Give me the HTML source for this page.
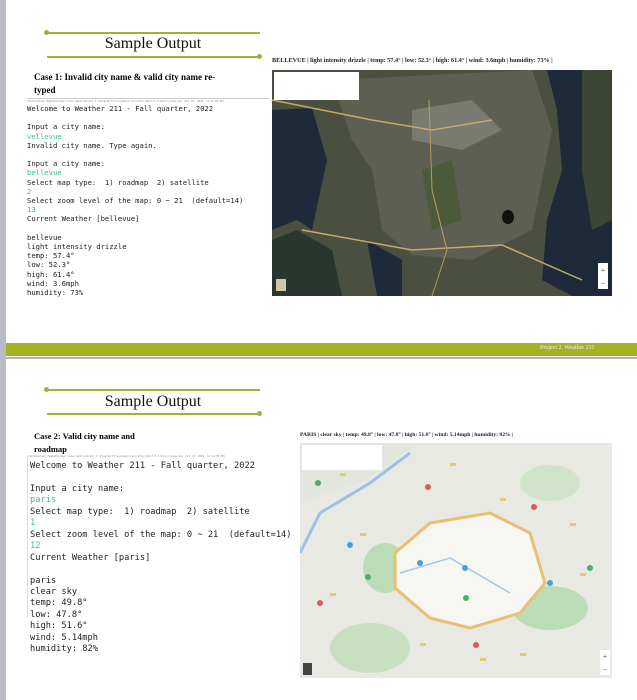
<!DOCTYPE html>
<html><head><meta charset="utf-8"><style>
*{margin:0;padding:0;box-sizing:border-box}
body{width:637px;height:700px;position:relative;background:#fff;overflow:hidden;font-family:"Liberation Serif",serif}
.abs{position:absolute}
.mono{font-family:"DejaVu Sans Mono","Liberation Mono",monospace;white-space:pre;color:#222}
.g{color:#3bbfa0}
.hl{position:absolute;height:2px;background:#a3b13a}
.dot{position:absolute;width:5px;height:5px;border-radius:50%;background:#a3b13a}
</style></head><body>
<div class="abs" style="left:0;top:0;width:6px;height:700px;background:#b9bcc6"></div>

<!-- Top slide -->
<div class="hl" style="left:46px;top:32px;width:214px"></div><div class="dot" style="left:44px;top:30px"></div>
<div class="abs" style="left:46px;top:35px;width:214px;text-align:center;font-size:16px;color:#111">Sample Output</div>
<div class="hl" style="left:47px;top:56px;width:213px"></div><div class="dot" style="left:257px;top:54px"></div>
<div class="abs" style="left:34px;top:71px;font-size:9px;font-weight:bold;line-height:13px;width:200px">Case 1: Invalid city name &amp; valid city name re-<br>typed</div>
<div class="abs" style="left:27px;top:98px;width:242px;height:1px;background:#ccc"></div>
<div class="abs mono" style="left:27px;top:100px;font-size:2.5px;color:#888">&lt;terminated&gt; MyWeatherApp [Java Application] C:\Program Files\Amazon Corretto\jdk17.0.4_9\bin\javaw.exe (Oct 15, 2022, 11:27:28 PM)</div>
<div class="abs mono" style="left:27px;top:104px;font-size:7.2px;line-height:9.2px">Welcome to Weather 211 - Fall quarter, 2022

Input a city name:
<span class="g">vellevue</span>
Invalid city name. Type again.

Input a city name:
<span class="g">bellevue</span>
Select map type:  1) roadmap  2) satellite
<span class="g">2</span>
Select zoom level of the map: 0 ~ 21  (default=14)
<span class="g">13</span>
Current Weather [bellevue]

bellevue
light intensity drizzle
temp: 57.4°
low: 52.3°
high: 61.4°
wind: 3.6mph
humidity: 73%</div>

<div class="abs" style="left:272px;top:57px;font-size:6.2px;font-weight:bold;white-space:nowrap;color:#222">BELLEVUE | light intensity drizzle | temp: 57.4° | low: 52.3° | high: 61.4° | wind: 3.6mph | humidity: 73% |</div>
<svg class="abs" style="left:272px;top:70px" width="340" height="226" viewBox="0 0 340 226">
<rect width="340" height="226" fill="#4a4f3f"/>
<path d="M0 40 L40 38 L55 90 L40 160 L25 150 L0 160Z" fill="#1e2a3a"/>
<path d="M0 170 L25 160 L60 180 L70 226 L0 226Z" fill="#2a3530"/>
<path d="M95 170 L130 190 L130 226 L105 226 Z" fill="#1e2a3a"/>
<path d="M275 0 L340 0 L340 226 L300 226 L270 210 L275 150 L290 100 L285 40Z" fill="#1e2a3a"/>
<path d="M310 0 L340 0 L340 150 L320 160 L310 100 Z" fill="#3d4535"/>
<path d="M60 10 L260 0 L280 60 L260 160 L200 190 L140 185 L110 160 L100 100 L80 70 Z" fill="#5c5f52"/>
<path d="M140 40 L200 30 L230 60 L190 80 L140 70Z" fill="#7a7b70"/>
<path d="M150 100 L180 90 L190 150 L160 160Z" fill="#4d5a3a"/>
<path d="M0 30 L100 50 L160 60 L220 50" stroke="#c9a96a" stroke-width="1.5" fill="none"/>
<path d="M30 160 L140 180 L230 175 L310 210" stroke="#c9a96a" stroke-width="1.5" fill="none"/>
<path d="M157 30 L160 120 L175 180 L160 226" stroke="#b99a60" stroke-width="1" fill="none"/>
<ellipse cx="236" cy="147" rx="6" ry="7" fill="#111"/>
<rect x="2" y="2" width="85" height="28" fill="#fff"/>
<rect x="4" y="209" width="10" height="12" fill="#cfc7a8"/>
<rect x="326" y="193" width="10" height="26" fill="#fff"/>
<text x="331" y="203" font-size="8" text-anchor="middle" fill="#555">+</text>
<text x="331" y="216" font-size="8" text-anchor="middle" fill="#555">−</text>
</svg>

<!-- Band -->
<div class="abs" style="left:6px;top:343px;width:631px;height:13px;background:#a3b322"></div>
<div class="abs" style="left:6px;top:357px;width:631px;height:2px;background:#b5b5b5"></div>
<div class="abs" style="left:540px;top:345px;font-size:6px;color:#eef;">Project 2. Weather 211</div>

<!-- Bottom slide -->
<div class="hl" style="left:46px;top:389px;width:214px"></div><div class="dot" style="left:44px;top:387px"></div>
<div class="abs" style="left:46px;top:393px;width:214px;text-align:center;font-size:16px;color:#111">Sample Output</div>
<div class="hl" style="left:47px;top:413px;width:213px"></div><div class="dot" style="left:257px;top:411px"></div>
<div class="abs" style="left:34px;top:430px;font-size:8.5px;font-weight:bold;line-height:13px">Case 2: Valid city name and<br>roadmap</div>
<div class="abs" style="left:27px;top:456px;width:1px;height:162px;background:#ddd"></div>
<div class="abs mono" style="left:28px;top:455px;font-size:2.5px;color:#888">&lt;terminated&gt; MyWeatherApp [Java Application] C:\Program Files\Amazon Corretto\jdk17.0.4_9\bin\javaw.exe (Oct 15, 2022, 11:24:09 PM)</div>
<div class="abs mono" style="left:30px;top:461px;font-size:8.7px;line-height:11.45px">Welcome to Weather 211 - Fall quarter, 2022

Input a city name:
<span class="g">paris</span>
Select map type:  1) roadmap  2) satellite
<span class="g">1</span>
Select zoom level of the map: 0 ~ 21  (default=14)
<span class="g">12</span>
Current Weather [paris]

paris
clear sky
temp: 49.8°
low: 47.8°
high: 51.6°
wind: 5.14mph
humidity: 82%</div>

<div class="abs" style="left:300px;top:432px;font-size:5.6px;font-weight:bold;white-space:nowrap;color:#222">PARIS | clear sky | temp: 49.8° | low: 47.8° | high: 51.6° | wind: 5.14mph | humidity: 82% |</div>
<svg class="abs" style="left:300px;top:443px" width="312" height="235" viewBox="0 0 312 235">
<rect width="312" height="235" fill="#e8e9e3"/>
<path d="M0 60 L60 40 L90 20 L120 0 L0 0Z" fill="#e3e6df"/>
<path d="M0 110 L20 70 L70 40 L110 10" stroke="#9cc0e8" stroke-width="3" fill="none"/>
<ellipse cx="85" cy="125" rx="22" ry="25" fill="#bcdcb8"/>
<ellipse cx="250" cy="165" rx="38" ry="22" fill="#bcdcb8"/>
<ellipse cx="70" cy="205" rx="40" ry="25" fill="#c7e0bf"/>
<ellipse cx="250" cy="40" rx="30" ry="18" fill="#cfe4c8"/>
<path d="M95 110 L130 80 L190 70 L230 90 L245 140 L220 170 L170 185 L130 175 L95 145Z" fill="#f6f6f3" stroke="#e8c070" stroke-width="3"/>
<path d="M100 130 L150 115 L210 150" stroke="#a6c6e6" stroke-width="1.5" fill="none"/>
<g fill="#e8c870">
<rect x="40" y="30" width="6" height="3"/><rect x="150" y="20" width="6" height="3"/><rect x="200" y="55" width="6" height="3"/><rect x="270" y="80" width="6" height="3"/><rect x="30" y="150" width="6" height="3"/><rect x="120" y="200" width="6" height="3"/><rect x="220" y="210" width="6" height="3"/><rect x="280" y="130" width="6" height="3"/><rect x="60" y="90" width="6" height="3"/><rect x="180" y="215" width="6" height="3"/>
</g>
<g fill="#e05858"><circle cx="128" cy="44" r="3"/><circle cx="176" cy="202" r="3"/><circle cx="234" cy="64" r="3"/><circle cx="20" cy="160" r="3"/></g>
<g fill="#4caf6a"><circle cx="18" cy="40" r="3"/><circle cx="68" cy="134" r="3"/><circle cx="166" cy="155" r="3"/><circle cx="290" cy="125" r="3"/></g>
<g fill="#4aa0d8"><circle cx="50" cy="102" r="3"/><circle cx="120" cy="120" r="3"/><circle cx="165" cy="125" r="3"/><circle cx="250" cy="140" r="3"/></g>
<rect x="2" y="2" width="80" height="25" fill="#fff"/>
<rect x="3" y="220" width="9" height="12" fill="#444"/>
<rect x="300" y="207" width="10" height="25" fill="#fff"/>
<text x="305" y="216" font-size="8" text-anchor="middle" fill="#555">+</text>
<text x="305" y="229" font-size="8" text-anchor="middle" fill="#555">−</text>
</svg>
</body></html>
